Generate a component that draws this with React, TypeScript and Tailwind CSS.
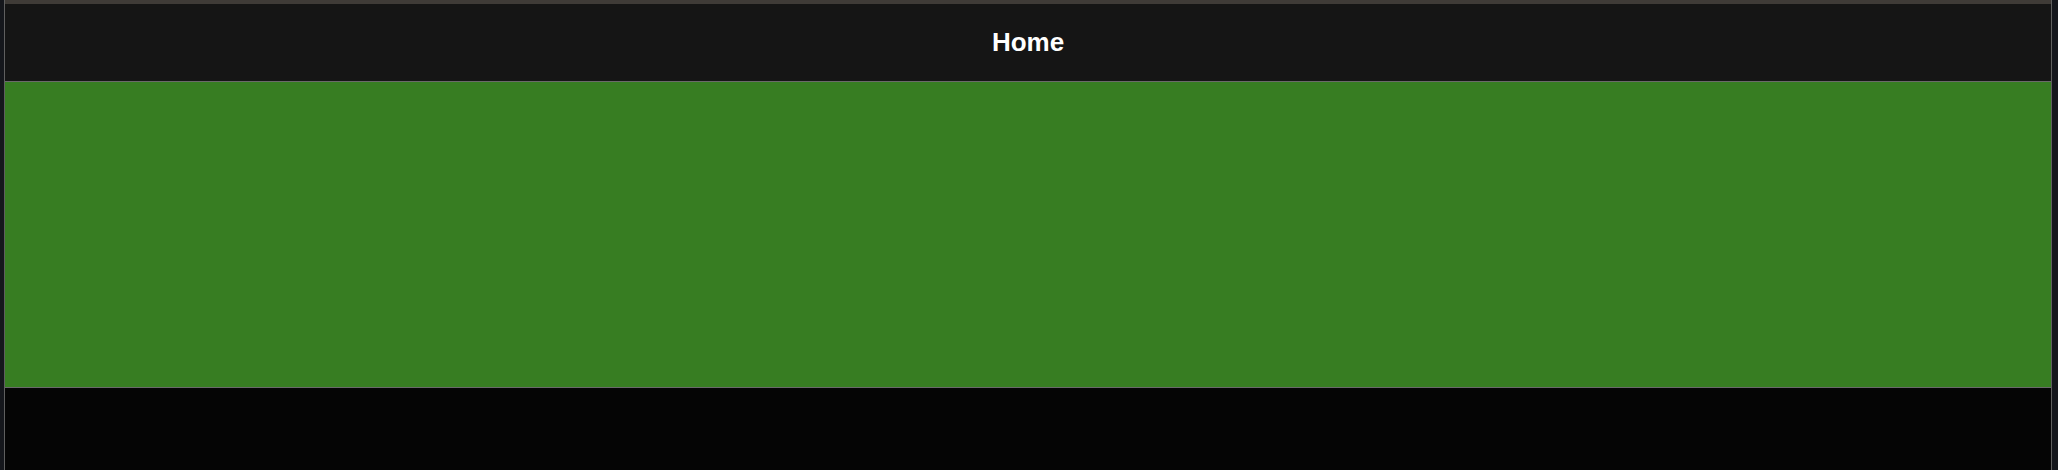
export default function App() {
  return (
    <div className="flex h-[470px] w-full bg-[#101216]" style={{ fontFamily: '"Liberation Sans", Arial, sans-serif' }}>
      <div className="w-[4px] shrink-0 bg-[#15171c]" />
      <div className="flex flex-1 flex-col border-x border-[#5f5f5f] bg-[#050505]">
        <div className="h-[4px] shrink-0 bg-[#3f3b37]" />
        <div className="flex h-[77px] shrink-0 items-center justify-center bg-[#151515] pb-[2px]">
          <span className="text-[26px] font-bold leading-none text-white">Home</span>
        </div>
        <div className="h-[307px] shrink-0 border-y border-[#6a6a6a] bg-[#377d22]" />
        <div className="flex-1 bg-[#050505]" />
      </div>
      <div className="w-[6px] shrink-0 bg-[#15171c]" />
    </div>
  );
}
